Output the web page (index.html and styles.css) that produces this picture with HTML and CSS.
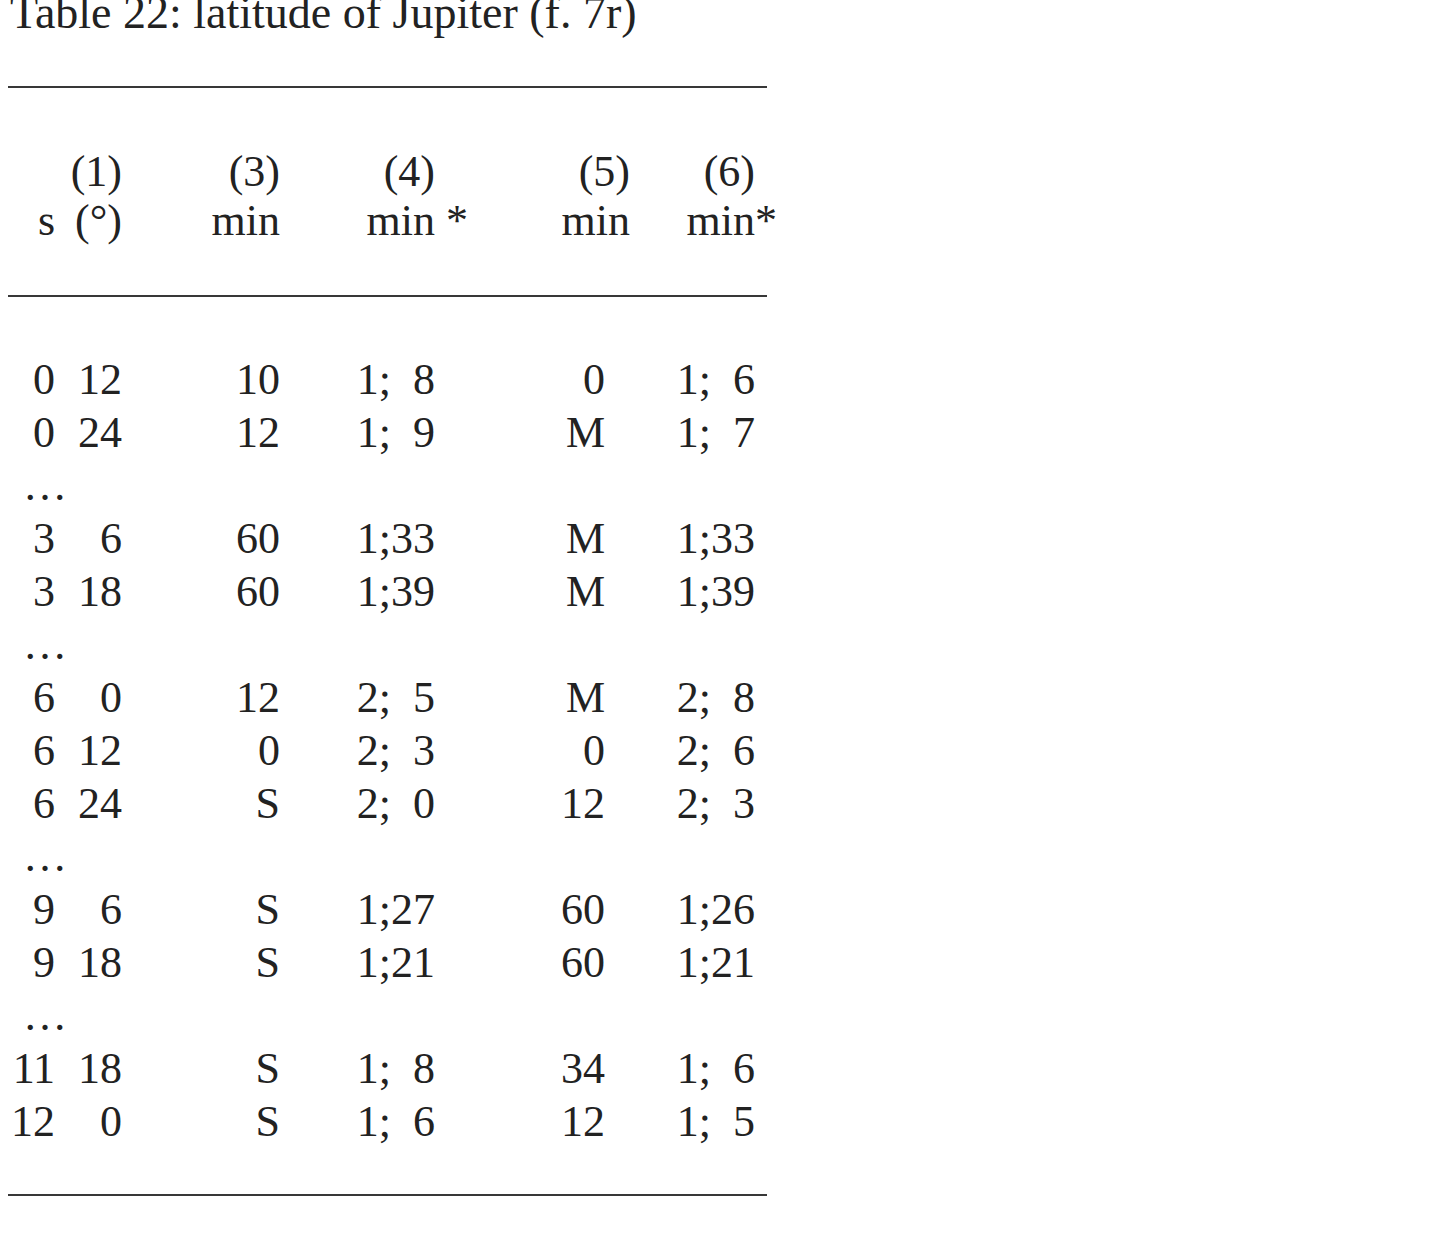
FILE: index.html
```html
<!DOCTYPE html>
<html>
<head>
<meta charset="utf-8">
<link rel="stylesheet" href="styles.css">
</head>
<body>
<div class="page">
  <h1 class="title">Table 22: latitude of Jupiter (f. 7r)</h1>
  <div class="rule rule-top"></div>
  <div class="head">
    <div class="row hrow">
      <span></span><span>(1)</span><span>(3)</span><span>(4)</span><span class="c5h">(5)</span><span>(6)</span>
    </div>
    <div class="row hrow">
      <span>s</span><span>(°)</span><span>min</span><span>min<span class="ast">&nbsp;*</span></span><span class="c5h">min</span><span>min<span class="ast2">*</span></span>
    </div>
  </div>
  <div class="rule rule-mid"></div>
  <div class="body">
    <div class="row"><span>0</span><span>12</span><span>10</span><span>1;&nbsp;&nbsp;8</span><span class="c5">0</span><span>1;&nbsp;&nbsp;6</span></div>
    <div class="row"><span>0</span><span>24</span><span>12</span><span>1;&nbsp;&nbsp;9</span><span class="c5">M</span><span>1;&nbsp;&nbsp;7</span></div>
    <div class="ell">…</div>
    <div class="row"><span>3</span><span>6</span><span>60</span><span>1;33</span><span class="c5">M</span><span>1;33</span></div>
    <div class="row"><span>3</span><span>18</span><span>60</span><span>1;39</span><span class="c5">M</span><span>1;39</span></div>
    <div class="ell">…</div>
    <div class="row"><span>6</span><span>0</span><span>12</span><span>2;&nbsp;&nbsp;5</span><span class="c5">M</span><span>2;&nbsp;&nbsp;8</span></div>
    <div class="row"><span>6</span><span>12</span><span>0</span><span>2;&nbsp;&nbsp;3</span><span class="c5">0</span><span>2;&nbsp;&nbsp;6</span></div>
    <div class="row"><span>6</span><span>24</span><span>S</span><span>2;&nbsp;&nbsp;0</span><span class="c5">12</span><span>2;&nbsp;&nbsp;3</span></div>
    <div class="ell">…</div>
    <div class="row"><span>9</span><span>6</span><span>S</span><span>1;27</span><span class="c5">60</span><span>1;26</span></div>
    <div class="row"><span>9</span><span>18</span><span>S</span><span>1;21</span><span class="c5">60</span><span>1;21</span></div>
    <div class="ell">…</div>
    <div class="row"><span>11</span><span>18</span><span>S</span><span>1;&nbsp;&nbsp;8</span><span class="c5">34</span><span>1;&nbsp;&nbsp;6</span></div>
    <div class="row"><span>12</span><span>0</span><span>S</span><span>1;&nbsp;&nbsp;6</span><span class="c5">12</span><span>1;&nbsp;&nbsp;5</span></div>
  </div>
  <div class="rule rule-bot"></div>
</div>
</body>
</html>
```
FILE: styles.css
```css
html, body {
  margin: 0;
  padding: 0;
  background: #ffffff;
}
body {
  font-family: "Liberation Serif", "Times New Roman", serif;
  color: #222222;
}
.page {
  width: 1455px;
  height: 1250px;
  overflow: hidden;
  padding-left: 8px;
  box-sizing: border-box;
}
.title {
  margin: -10px 0 0 0;
  padding-left: 2px;
  font-size: 46px;
  line-height: 46px;
  font-weight: normal;
  white-space: nowrap;
}
.rule {
  width: 759px;
  height: 2px;
  background: #383838;
}
.rule-top {
  margin-top: 50px;
}
.head {
  padding-top: 59px;
  padding-bottom: 50px;
}
.row {
  display: grid;
  grid-template-columns: 47px 67px 158px 155px 195px 125px;
  font-size: 44px;
  line-height: 53px;
  white-space: nowrap;
}
.row > span {
  text-align: right;
}
.hrow {
  line-height: 49px;
}
.c5 {
  padding-right: 25px;
}
.ast {
  margin-right: -0.75em;
}
.ast2 {
  margin-right: -0.5em;
}
.body {
  padding-top: 56px;
  padding-bottom: 46px;
}
.ell {
  font-size: 44px;
  line-height: 53px;
  padding-left: 15px;
}
```
